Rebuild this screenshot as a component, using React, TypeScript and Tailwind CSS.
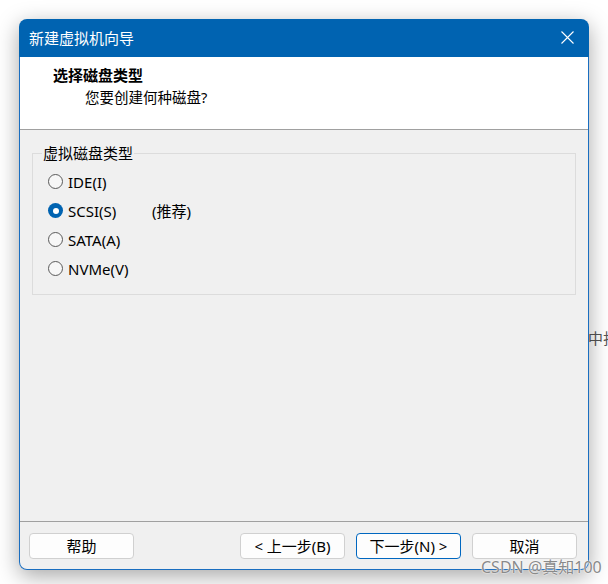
import React, { useState } from 'react';

const font = "font-['Noto_Sans','Noto_Sans_CJK_SC',sans-serif]";

interface RadioProps {
  label: string;
  checked: boolean;
  note?: string;
  onSelect: () => void;
}

const Radio: React.FC<RadioProps> = ({ label, checked, note, onSelect }) => (
  <div className="flex h-[29px] items-center cursor-default" onClick={onSelect}>
    {checked ? (
      <span className="flex h-[15px] w-[15px] items-center justify-center rounded-full bg-[#0063b1]">
        <span className="h-[6px] w-[6px] rounded-full bg-white" />
      </span>
    ) : (
      <span className="h-[15px] w-[15px] rounded-full border border-[#5a5a5a] bg-[#f7f7f7]" />
    )}
    <span className="ml-[5px] w-[84px] text-[15px] leading-[20px] text-black">{label}</span>
    {note && <span className="text-[15px] leading-[20px] text-black">{note}</span>}
  </div>
);

const DlgButton: React.FC<{ children: React.ReactNode; primary?: boolean }> = ({ children, primary }) => (
  <button
    className={`h-[26px] w-[105px] rounded-[4px] border bg-[#fdfdfd] text-[15px] leading-[20px] text-black ${
      primary ? 'border-[#0067c0]' : 'border-[#d0d0d0]'
    }`}
  >
    {children}
  </button>
);

export default function App() {
  const [disk, setDisk] = useState('scsi');

  const options = [
    { id: 'ide', label: 'IDE(I)' },
    { id: 'scsi', label: 'SCSI(S)', note: '(推荐)' },
    { id: 'sata', label: 'SATA(A)' },
    { id: 'nvme', label: 'NVMe(V)' },
  ];

  return (
    <div className={`relative h-[584px] w-[608px] overflow-hidden bg-white ${font}`}>
      {/* window behind the dialog, only its edge shows */}
      <span className="absolute left-[588px] top-[328px] whitespace-nowrap text-[15px] leading-[20px] text-[#555]">中打</span>

      <div className="relative ml-[19px] mt-[19px] flex h-[551px] w-[570px] flex-col rounded-[8px] bg-[#f0f0f0] shadow-[0_6px_22px_rgba(0,0,0,0.35)]">
        {/* title bar */}
        <div className="flex h-[38px] items-center justify-between rounded-t-[8px] bg-[#0063b1] pl-[10px] pr-[15px]">
          <span className="text-[15px] leading-[20px] text-white">新建虚拟机向导</span>
          <svg width="13" height="13" viewBox="0 0 13 13" className="mb-[1px]">
            <path d="M0.5 0.5 L12.5 12.5 M12.5 0.5 L0.5 12.5" stroke="#fff" strokeWidth="1.1" />
          </svg>
        </div>

        <div className="flex flex-1 flex-col overflow-hidden rounded-b-[8px] border-x border-b border-[#1a6ec0]">
          {/* header */}
          <div className="h-[73px] border-b border-[#a0a0a0] bg-white pt-[8px]">
            <div className="pl-[33px] text-[15px] font-bold leading-[20px] text-black">选择磁盘类型</div>
            <div className="mt-[2px] pl-[65px] text-[14.5px] leading-[20px] text-black">您要创建何种磁盘?</div>
          </div>

          {/* body */}
          <div className="flex-1 px-[12px] pt-[13px]">
            <fieldset className="border border-[#dcdcdc] pb-[11px] pl-[15px] pr-[10px]">
              <legend className="-ml-[6px] px-[1px] text-[15px] leading-[20px] text-black">虚拟磁盘类型</legend>
              <div className="pt-[4px]">
                {options.map((o) => (
                  <Radio
                    key={o.id}
                    label={o.label}
                    note={o.note}
                    checked={disk === o.id}
                    onSelect={() => setDisk(o.id)}
                  />
                ))}
              </div>
            </fieldset>
          </div>

          {/* footer */}
          <div className="flex h-[48px] items-start border-t border-[#a0a0a0] pl-[9px] pr-[11px] pt-[11px]">
            <DlgButton>帮助</DlgButton>
            <div className="ml-auto flex gap-[11px]">
              <DlgButton>&lt; 上一步(B)</DlgButton>
              <DlgButton primary>下一步(N) &gt;</DlgButton>
              <DlgButton>取消</DlgButton>
            </div>
          </div>
        </div>
      </div>

      {/* watermark */}
      <span className="absolute left-[481px] top-[557px] whitespace-nowrap text-[16px] leading-[20px] text-[#8a8a8a] [text-shadow:0_0_2px_#fff,0_0_1px_#fff]">
        CSDN @真知100
      </span>
    </div>
  );
}
